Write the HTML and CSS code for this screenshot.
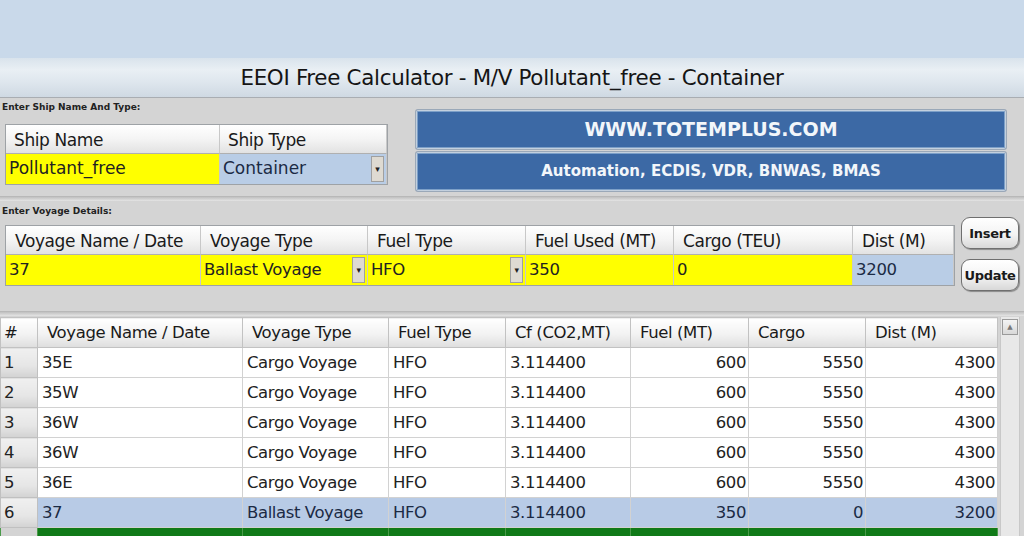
FILE: index.html
```html
<!DOCTYPE html>
<html>
<head>
<meta charset="utf-8">
<link rel="stylesheet" href="styles.css">
</head>
<body>
<div class="sky"></div>
<div class="titlebar">EEOI Free Calculator - M/V Pollutant_free - Container</div>
<div class="panel">
  <div class="section ship-section">
    <div class="label">Enter Ship Name And Type:</div>
    <div class="ship-row">
      <div class="grid ship-grid">
        <div class="hcell">Ship Name</div>
        <div class="hcell">Ship Type</div>
        <div class="dcell yellow">Pollutant_free</div>
        <div class="dcell blue combo">Container<span class="drop">&#9662;</span></div>
      </div>
      <div class="ads">
        <div class="ad ad-big">WWW.TOTEMPLUS.COM</div>
        <div class="ad ad-small">Automation, ECDIS, VDR, BNWAS, BMAS</div>
      </div>
    </div>
  </div>
  <div class="sep"></div>
  <div class="section voyage-section">
    <div class="label">Enter Voyage Details:</div>
    <div class="voyage-row">
      <div class="grid voyage-grid">
        <div class="hcell">Voyage Name / Date</div>
        <div class="hcell">Voyage Type</div>
        <div class="hcell">Fuel Type</div>
        <div class="hcell">Fuel Used (MT)</div>
        <div class="hcell">Cargo (TEU)</div>
        <div class="hcell">Dist (M)</div>
        <div class="dcell yellow">37</div>
        <div class="dcell yellow combo">Ballast Voyage<span class="drop">&#9662;</span></div>
        <div class="dcell yellow combo">HFO<span class="drop">&#9662;</span></div>
        <div class="dcell yellow">350</div>
        <div class="dcell yellow">0</div>
        <div class="dcell blue">3200</div>
      </div>
      <div class="buttons">
        <button class="btn">Insert</button>
        <button class="btn">Update</button>
      </div>
    </div>
  </div>
  <div class="sep sep2"></div>
  <div class="table-area">
    <table class="data">
      <colgroup>
        <col class="c0"><col class="c1"><col class="c2"><col class="c3"><col class="c4"><col class="c5"><col class="c6"><col class="c7">
      </colgroup>
      <thead>
        <tr><th class="num">#</th><th>Voyage Name / Date</th><th>Voyage Type</th><th>Fuel Type</th><th>Cf (CO2,MT)</th><th>Fuel (MT)</th><th>Cargo</th><th>Dist (M)</th></tr>
      </thead>
      <tbody>
        <tr><td class="num">1</td><td>35E</td><td>Cargo Voyage</td><td>HFO</td><td>3.114400</td><td class="r">600</td><td class="r">5550</td><td class="r">4300</td></tr>
        <tr><td class="num">2</td><td>35W</td><td>Cargo Voyage</td><td>HFO</td><td>3.114400</td><td class="r">600</td><td class="r">5550</td><td class="r">4300</td></tr>
        <tr><td class="num">3</td><td>36W</td><td>Cargo Voyage</td><td>HFO</td><td>3.114400</td><td class="r">600</td><td class="r">5550</td><td class="r">4300</td></tr>
        <tr><td class="num">4</td><td>36W</td><td>Cargo Voyage</td><td>HFO</td><td>3.114400</td><td class="r">600</td><td class="r">5550</td><td class="r">4300</td></tr>
        <tr><td class="num">5</td><td>36E</td><td>Cargo Voyage</td><td>HFO</td><td>3.114400</td><td class="r">600</td><td class="r">5550</td><td class="r">4300</td></tr>
        <tr class="sel"><td class="num">6</td><td>37</td><td>Ballast Voyage</td><td>HFO</td><td>3.114400</td><td class="r">350</td><td class="r">0</td><td class="r">3200</td></tr>
        <tr class="green"><td class="num"></td><td></td><td></td><td></td><td></td><td></td><td></td><td></td></tr>
      </tbody>
    </table>
    <div class="scrollbar"><div class="arrow">&#9650;</div></div>
  </div>
</div>
</body>
</html>
```
FILE: styles.css
```css
html, body {
  margin: 0;
  padding: 0;
}
body {
  width: 1024px;
  height: 536px;
  overflow: hidden;
  background: #d4d4d4;
  font-family: "DejaVu Sans", Verdana, sans-serif;
  color: #1a1a1a;
}
.sky {
  height: 58px;
  background: #c9d9ea;
}
.titlebar {
  height: 39px;
  border-bottom: 1px solid #a9adb2;
  background: linear-gradient(180deg, #d9e3ec 0%, #e9eff4 30%, #dfe7ee 60%, #cfd9e3 100%);
  text-align: center;
  font-size: 21.4px;
  line-height: 40px;
  color: #151515;
  letter-spacing: -0.3px;
}
.panel {
  background: #d4d4d4;
}
.section {
  padding: 0 5px;
}
.label {
  font-size: 9px;
  font-weight: bold;
  color: #222;
  margin-left: -3px;
}
.ship-section {
  padding-top: 4px;
  height: 94px;
}
.ship-row {
  display: flex;
  gap: 28px;
  margin-top: 12px;
}
.grid {
  display: grid;
  border: 1px solid #9ea2a6;
  background: #fff;
}
.ship-grid {
  grid-template-columns: 214px 167px;
  grid-template-rows: 29px 30px;
  height: 59px;
}
.hcell {
  background: linear-gradient(180deg, #ffffff 0%, #f4f4f4 50%, #e2e2e2 100%);
  border-right: 1px solid #c8c8c8;
  border-bottom: 1px solid #b0b0b0;
  font-size: 17px;
  line-height: 30px;
  padding-left: 8px;
  white-space: nowrap;
  overflow: hidden;
  letter-spacing: -0.4px;
}
.dcell {
  font-size: 16.5px;
  line-height: 29px;
  padding-left: 3px;
  border-right: 1px solid #c8c8c8;
  white-space: nowrap;
  position: relative;
  letter-spacing: -0.3px;
  color: #222;
}
.ship-grid .dcell {
  font-size: 17px;
  letter-spacing: 0;
}
.yellow { background: #ffff00; }
.blue { background: #b9cde6; color: #1b2a44; }
.drop {
  position: absolute;
  right: 2px;
  top: 2px;
  bottom: 2px;
  width: 11px;
  background: #dedad2;
  border: 1px solid #a0a0a0;
  font-size: 9px;
  line-height: 24px;
  text-align: center;
  color: #222;
}
.ads {
  width: 590px;
  display: flex;
  flex-direction: column;
  gap: 3px;
  margin-top: -14px;
}
.ad {
  background: #3c69a5;
  border: 1px solid #c3d0de;
  box-shadow: inset 0 0 0 1px #7da0c8, 0 0 0 1px #9aa8b8;
  color: #f2f6fa;
  font-weight: bold;
  text-align: center;
  border-radius: 2px;
}
.ad-big {
  height: 37px;
  font-size: 19px;
  line-height: 36px;
}
.ad-small {
  height: 37px;
  font-size: 15px;
  line-height: 37px;
}
.sep {
  height: 4px;
  background: linear-gradient(180deg, #c0c0c0, #e4e4e4);
  border-top: 1px solid #b8b8b8;
}
.voyage-section {
  padding-top: 5px;
  height: 105px;
}
.voyage-row {
  display: flex;
  gap: 6px;
  margin-top: 9px;
}
.voyage-grid {
  grid-template-columns: 195px 167px 158px 148px 179px 101px;
  grid-template-rows: 29px 30px;
  height: 59px;
}
.voyage-grid .hcell { padding-left: 9px; }
.buttons {
  display: flex;
  flex-direction: column;
  gap: 10px;
  margin-top: -8px;
}
.btn {
  width: 58px;
  height: 32px;
  border: 1px solid #6f6f6f;
  border-radius: 9px;
  background: linear-gradient(180deg, #ffffff 0%, #f3f3f3 55%, #d8d8d8 100%);
  box-shadow: 1px 1px 1px #8a8a8a;
  font-family: "DejaVu Sans", Verdana, sans-serif;
  font-weight: bold;
  font-size: 13px;
  color: #1a1a1a;
  padding: 0;
  letter-spacing: -0.3px;
}
.table-area {
  display: flex;
  padding-top: 1px;
  background: #d4d4d4;
}
.data {
  border-collapse: collapse;
  table-layout: fixed;
  width: 997px;
  background: #fff;
}
.c0 { width: 37px; }
.c1 { width: 205px; }
.c2 { width: 146px; }
.c3 { width: 117px; }
.c4 { width: 125px; }
.c5 { width: 118px; }
.c6 { width: 117px; }
.c7 { width: 132px; }
.data th, .data td {
  height: 29px;
  padding: 0 0 0 4px;
  border: 1px solid #d2d2d2;
  font-size: 16.5px;
  font-weight: normal;
  text-align: left;
  white-space: nowrap;
  overflow: hidden;
  letter-spacing: -0.4px;
  color: #222;
}
.data th {
  background: linear-gradient(180deg, #ffffff 0%, #f2f2f2 55%, #dedede 100%);
  border-color: #c2c2c2;
  padding-left: 9px;
  color: #1a1a1a;
}
.data th.num, .data td.num {
  padding-left: 3px;
}
.data td.num {
  background: linear-gradient(180deg, #f0f0f0 0%, #e6e6e6 60%, #d2d2d2 100%);
  border-color: #c0c0c0;
}
.data td.r {
  text-align: right;
  padding: 0 2px 0 0;
}
.data tr.sel td {
  background: #b8cbe6;
  color: #1b2a44;
}
.data tr.sel td.num {
  background: linear-gradient(180deg, #f0f0f0 0%, #e6e6e6 60%, #d2d2d2 100%);
  color: #222;
}
.data tr.green td {
  background: #107a18;
  border-color: #4a9a4a;
}
.data tr.green td.num {
  background: #d4d4d4;
}
.scrollbar {
  width: 18px;
  margin-left: 2px;
  background: #e8e8e8;
  border-left: 1px solid #c8c8c8;
  border-right: 1px solid #c8c8c8;
  height: 230px;
}
.arrow {
  height: 14px;
  margin: 2px 1px;
  background: linear-gradient(180deg, #f4f4f4, #d8d8d8);
  border: 1px solid #9a9a9a;
  font-size: 7px;
  line-height: 14px;
  text-align: center;
  color: #777;
}
```
